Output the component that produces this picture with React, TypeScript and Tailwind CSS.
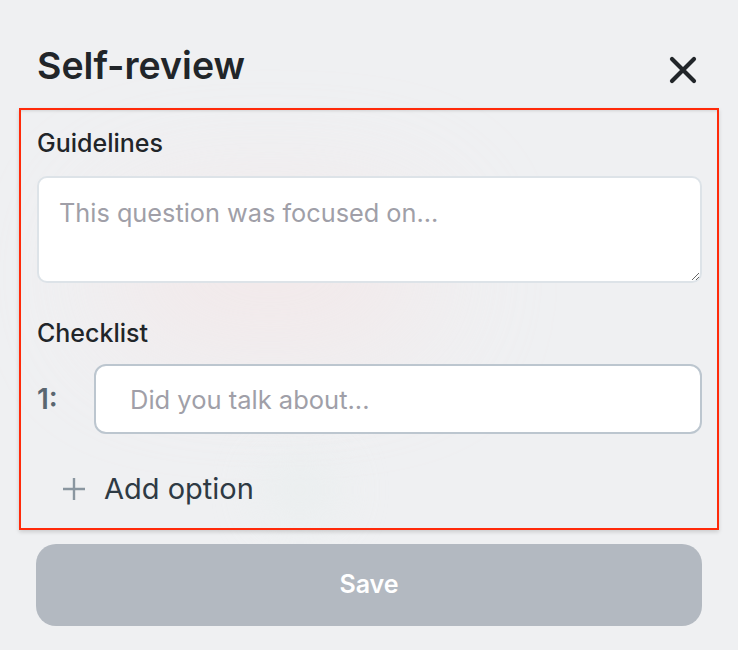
export default function App() {
  return (
    <div className="relative min-h-[650px] w-full overflow-hidden bg-[#eff0f2] font-['Inter',sans-serif]">
      {/* faint background blobs */}
      <div className="pointer-events-none absolute left-[110px] top-[210px] h-[130px] w-[320px] rounded-full bg-[#f6e2e2] opacity-60 blur-3xl" />
      <div className="pointer-events-none absolute left-[260px] top-[450px] h-[80px] w-[80px] rounded-full bg-[#e9eeee] opacity-70 blur-xl" />

      <div className="relative flex flex-col px-[19px] pt-[43px]">
        <div className="flex items-start justify-between pl-[18px] pr-[22px]">
          <h1 className="text-[37.5px] font-semibold leading-[46px] text-[#212529]">Self-review</h1>
          <svg className="mt-[13px]" width="28" height="28" viewBox="0 0 28 28" fill="none">
            <path d="M3 3 L25 25 M25 3 L3 25" stroke="#212529" strokeWidth="4.2" strokeLinecap="round" />
          </svg>
        </div>

        <div className="mt-[19px] border-2 border-[#ff2a0a] pb-[21px] pl-4 pr-[15px] pt-[18px] shadow-[0_2px_4px_rgba(0,0,0,0.15),inset_0_3px_3px_-2px_rgba(0,0,0,0.12)]">
          <label className="block text-[25px] font-medium leading-[30px] text-[#212529]">Guidelines</label>
          <textarea
            placeholder="This question was focused on..."
            className="mt-[18px] block h-[107px] w-full resize-y rounded-[10px] border-2 border-[#dde3e8] bg-white px-5 pt-[20px] text-[25.3px] leading-[30px] text-[#212529] outline-none placeholder:text-[#a09fa8]"
          />

          <label className="mt-[35px] block text-[25px] font-medium leading-[30px] text-[#212529]">Checklist</label>
          <div className="mt-[16px] flex items-center">
            <span className="w-[57px] text-[28px] font-semibold leading-[36px] text-[#5a6670]">1:</span>
            <input
              placeholder="Did you talk about..."
              className="h-[70px] flex-1 rounded-[12px] border-2 border-[#bcc6cf] bg-white px-[34px] text-[25.5px] text-[#212529] outline-none placeholder:text-[#a09fa8]"
            />
          </div>

          <button className="mt-[37px] flex items-center gap-[18px] pl-[25px] text-[29px] leading-[36px] text-[#2e3a44]">
            <svg width="24" height="24" viewBox="0 0 24 24" fill="none">
              <path d="M12 1 V23 M1 12 H23" stroke="#8a96a0" strokeWidth="2.4" />
            </svg>
            Add option
          </button>
        </div>

        <button className="mx-[17px] mt-[14px] h-[82px] rounded-[20px] bg-[#b3b9c1] text-[25px] font-semibold text-white">
          Save
        </button>
      </div>
    </div>
  );
}
